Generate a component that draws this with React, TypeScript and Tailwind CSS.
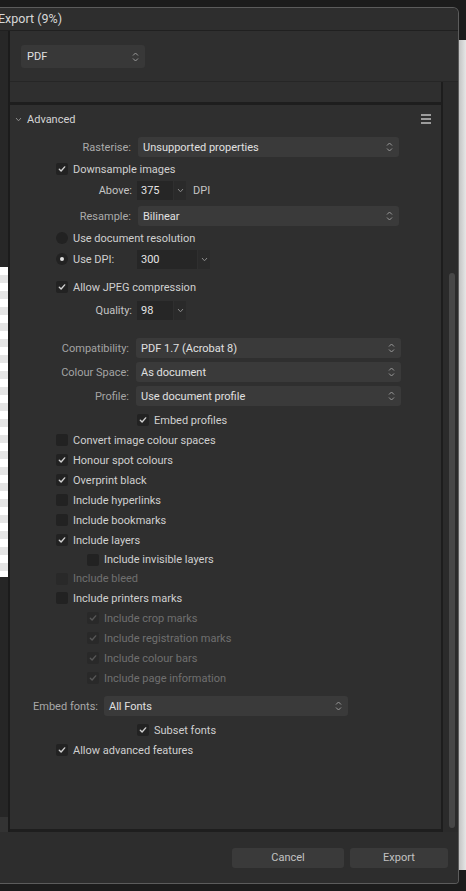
import React from "react";

function UpDown() {
  return (
    <svg width="7" height="12" viewBox="0 0 7 12" className="shrink-0">
      <path d="M1 4.5 L3.5 2 L6 4.5" fill="none" stroke="#9a9a9a" strokeWidth="1" />
      <path d="M1 7.5 L3.5 10 L6 7.5" fill="none" stroke="#9a9a9a" strokeWidth="1" />
    </svg>
  );
}

function ChevDown({ color = "#8a8a8a" }: { color?: string }) {
  return (
    <svg width="7" height="5" viewBox="0 0 7 5">
      <path d="M1 1 L3.5 3.8 L6 1" fill="none" stroke={color} strokeWidth="1" />
    </svg>
  );
}

function Check({ checked = false, disabled = false }: { checked?: boolean; disabled?: boolean }) {
  return (
    <div
      className={`w-[12px] h-[12px] rounded-[2px] flex items-center justify-center shrink-0 ${
        disabled ? "bg-[#292929]" : "bg-[#222222]"
      }`}
    >
      {checked && (
        <svg width="8" height="8" viewBox="0 0 8 8">
          <path
            d="M1.3 4.3 L3.1 6 L6.7 1.9"
            fill="none"
            stroke={disabled ? "#575757" : "#d2d2d2"}
            strokeWidth="1.4"
            strokeLinecap="round"
            strokeLinejoin="round"
          />
        </svg>
      )}
    </div>
  );
}

function Radio({ on = false }: { on?: boolean }) {
  return (
    <div className="w-[12px] h-[12px] rounded-full bg-[#222222] flex items-center justify-center shrink-0">
      {on && <div className="w-[4px] h-[4px] rounded-full bg-[#e0e0e0]" />}
    </div>
  );
}

function CheckRow({
  label,
  checked = false,
  disabled = false,
  level = 0,
  h = "h-[20px]",
}: {
  label: string;
  checked?: boolean;
  disabled?: boolean;
  level?: number;
  h?: string;
}) {
  const pad = level === 0 ? "pl-[46px]" : level === 1 ? "pl-[77px]" : "pl-[127px]";
  return (
    <div className={`${h} flex items-center ${pad}`}>
      <Check checked={checked} disabled={disabled} />
      <span className={`ml-[5px] ${disabled ? "text-[#6f6f6f]" : "text-[#d0d0d0]"}`}>{label}</span>
    </div>
  );
}

function SelectBox({ w, text }: { w: string; text: string }) {
  return (
    <div className={`${w} h-[20px] bg-[#3a3a3a] rounded-[3px] flex items-center justify-between pl-[5px] pr-[6px]`}>
      <span className="text-[#e0e0e0]">{text}</span>
      <UpDown />
    </div>
  );
}

function NumBox({ w, text }: { w: string; text: string }) {
  return (
    <div className="flex h-[19px]">
      <div className={`${w} h-[19px] bg-[#262626] flex items-center pl-[4px] text-[#e4e4e4]`}>{text}</div>
      <div className="ml-[1px] w-[12px] h-[19px] bg-[#2a2a2a] flex items-center justify-center">
        <ChevDown />
      </div>
    </div>
  );
}

export default function App() {
  return (
    <div className="w-[466px] h-[891px] bg-[#1c1c1c] flex overflow-hidden font-['Roboto','Noto_Sans',sans-serif] text-[11px] leading-none">
      {/* Window */}
      <div className="w-[459px] h-[877px] mt-[7px] flex flex-col bg-[#2d2d2d] border-t border-r border-b border-[#5c5c5c] rounded-tr-[6px] rounded-br-[4px] overflow-hidden">
        {/* Title */}
        <div className="h-[23px] shrink-0 flex items-center border-b border-[#202020] bg-[#2e2e2e]">
          <span className="ml-[-2px] text-[12.5px] text-[#d8d8d8]">Export (9%)</span>
        </div>

        {/* Body */}
        <div className="h-[801px] shrink-0 flex">
          {/* left strip */}
          <div className="w-[8px] flex flex-col">
            <div className="h-[236px] bg-[#272727]" />
            <div className="h-[310px] bg-[#ffffff] [background-image:conic-gradient(#e4e4e4_25%,#ffffff_0_50%,#e4e4e4_0_75%,#ffffff_0)] [background-size:16px_16px]" />
            <div className="flex-1 bg-[#262626]" />
            <div className="h-[15px] bg-[#333333]" />
          </div>
          <div className="w-[2px] bg-[#1b1b1b]" />

          <div className="flex-1 flex flex-col">
            {/* top section */}
            <div className="h-[51px] shrink-0 bg-[#2f2f2f] border-b border-[#262626] pl-[11px] pt-[14px]">
              <div className="w-[124px] h-[23px] bg-[#383838] rounded-[3px] flex items-center justify-between pl-[6px] pr-[6px]">
                <span className="text-[#e0e0e0]">PDF</span>
                <UpDown />
              </div>
            </div>

            <div className="flex-1 flex">
              {/* scroll content */}
              <div className="w-[431px] flex flex-col">
                <div className="h-[20px] bg-[#2f2f2f]" />
                <div className="h-[3px] bg-[#1e1e1e]" />
                <div className="flex-1 bg-[#2f2f2f] flex flex-col">
                  {/* header */}
                  <div className="h-[28px] flex items-center pl-[5px] pr-[10px]">
                    <ChevDown color="#8c8c8c" />
                    <span className="ml-[5px] text-[#d4d4d4]">Advanced</span>
                    <div className="ml-auto flex flex-col gap-[2px]">
                      <div className="w-[10px] h-[2px] bg-[#9c9c9c]" />
                      <div className="w-[10px] h-[2px] bg-[#9c9c9c]" />
                      <div className="w-[10px] h-[2px] bg-[#9c9c9c]" />
                    </div>
                  </div>

                  <div className="h-[4px]" />
                  {/* Rasterise */}
                  <div className="h-[20px] flex items-center">
                    <div className="w-[121px] text-right text-[#ababab]">Rasterise:</div>
                    <div className="ml-[7px]">
                      <SelectBox w="w-[261px]" text="Unsupported properties" />
                    </div>
                  </div>
                  <div className="h-[2px]" />
                  <CheckRow label="Downsample images" checked />
                  <div className="h-[1px]" />
                  {/* Above */}
                  <div className="h-[20px] flex items-center">
                    <div className="w-[122px] text-right text-[#c4c4c4]">Above:</div>
                    <div className="ml-[5px]">
                      <NumBox w="w-[36px]" text="375" />
                    </div>
                    <span className="ml-[7px] text-[#c4c4c4]">DPI</span>
                  </div>
                  <div className="h-[6px]" />
                  {/* Resample */}
                  <div className="h-[20px] flex items-center">
                    <div className="w-[121px] text-right text-[#ababab]">Resample:</div>
                    <div className="ml-[7px]">
                      <SelectBox w="w-[261px]" text="Bilinear" />
                    </div>
                  </div>
                  <div className="h-[2px]" />
                  <div className="h-[20px] flex items-center pl-[46px]">
                    <Radio />
                    <span className="ml-[5px] text-[#d0d0d0]">Use document resolution</span>
                  </div>
                  <div className="h-[1px]" />
                  <div className="h-[20px] flex items-center pl-[46px]">
                    <Radio on />
                    <span className="ml-[5px] w-[64px] text-[#d0d0d0]">Use DPI:</span>
                    <NumBox w="w-[60px]" text="300" />
                  </div>
                  <div className="h-[8px]" />
                  <CheckRow label="Allow JPEG compression" checked />
                  <div className="h-[3px]" />
                  {/* Quality */}
                  <div className="h-[20px] flex items-center">
                    <div className="w-[122px] text-right text-[#c4c4c4]">Quality:</div>
                    <div className="ml-[5px]">
                      <NumBox w="w-[36px]" text="98" />
                    </div>
                  </div>
                  <div className="h-[18px]" />
                  {/* Compatibility */}
                  <div className="h-[20px] flex items-center">
                    <div className="w-[119px] text-right text-[#a4a4a4]">Compatibility:</div>
                    <div className="ml-[7px]">
                      <SelectBox w="w-[265px]" text="PDF 1.7 (Acrobat 8)" />
                    </div>
                  </div>
                  <div className="h-[4px]" />
                  <div className="h-[20px] flex items-center">
                    <div className="w-[119px] text-right text-[#a4a4a4]">Colour Space:</div>
                    <div className="ml-[7px]">
                      <SelectBox w="w-[265px]" text="As document" />
                    </div>
                  </div>
                  <div className="h-[4px]" />
                  <div className="h-[20px] flex items-center">
                    <div className="w-[119px] text-right text-[#a4a4a4]">Profile:</div>
                    <div className="ml-[7px]">
                      <SelectBox w="w-[265px]" text="Use document profile" />
                    </div>
                  </div>
                  <div className="h-[4px]" />
                  <CheckRow label="Embed profiles" checked level={2} />
                  <CheckRow label="Convert image colour spaces" />
                  <CheckRow label="Honour spot colours" checked />
                  <CheckRow label="Overprint black" checked />
                  <CheckRow label="Include hyperlinks" />
                  <CheckRow label="Include bookmarks" />
                  <CheckRow label="Include layers" checked />
                  <CheckRow label="Include invisible layers" level={1} h="h-[19px]" />
                  <CheckRow label="Include bleed" disabled h="h-[19px]" />
                  <CheckRow label="Include printers marks" />
                  <CheckRow label="Include crop marks" checked disabled level={1} />
                  <CheckRow label="Include registration marks" checked disabled level={1} />
                  <CheckRow label="Include colour bars" checked disabled level={1} />
                  <CheckRow label="Include page information" checked disabled level={1} />
                  <div className="h-[8px]" />
                  {/* Embed fonts */}
                  <div className="h-[20px] flex items-center">
                    <div className="w-[88px] text-right text-[#a8a8a8]">Embed fonts:</div>
                    <div className="ml-[6px]">
                      <SelectBox w="w-[244px]" text="All Fonts" />
                    </div>
                  </div>
                  <div className="h-[4px]" />
                  <CheckRow label="Subset fonts" checked level={2} />
                  <CheckRow label="Allow advanced features" checked />
                </div>
                <div className="h-[3px] bg-[#1e1e1e]" />
              </div>
              <div className="w-[2px] bg-[#1d1d1d]" />
              {/* scroll track */}
              <div className="flex-1 bg-[#2b2b2b] pt-[191px] pl-[6px]">
                <div className="w-[6px] h-[555px] rounded-full bg-[#474747]" />
              </div>
            </div>
          </div>
        </div>

        {/* Footer */}
        <div className="flex-1 flex items-center justify-end gap-[6px] pr-[10px] bg-[#2d2d2d]">
          <div className="w-[112px] h-[20px] rounded-[3px] bg-[#3a3a3a] flex items-center justify-center text-[#c2c2c2]">
            Cancel
          </div>
          <div className="w-[98px] h-[20px] rounded-[3px] bg-[#3a3a3a] flex items-center justify-center text-[#c2c2c2]">
            Export
          </div>
        </div>
      </div>

      {/* right strip */}
      <div className="w-[7px] flex flex-col">
        <div className="h-[40px] bg-[#1c1c1c]" />
        <div className="h-[830px] bg-gradient-to-r from-[#c4c4c4] to-[#e6e6e6]" />
        <div className="flex-1 bg-[#1c1c1c]" />
      </div>
    </div>
  );
}
